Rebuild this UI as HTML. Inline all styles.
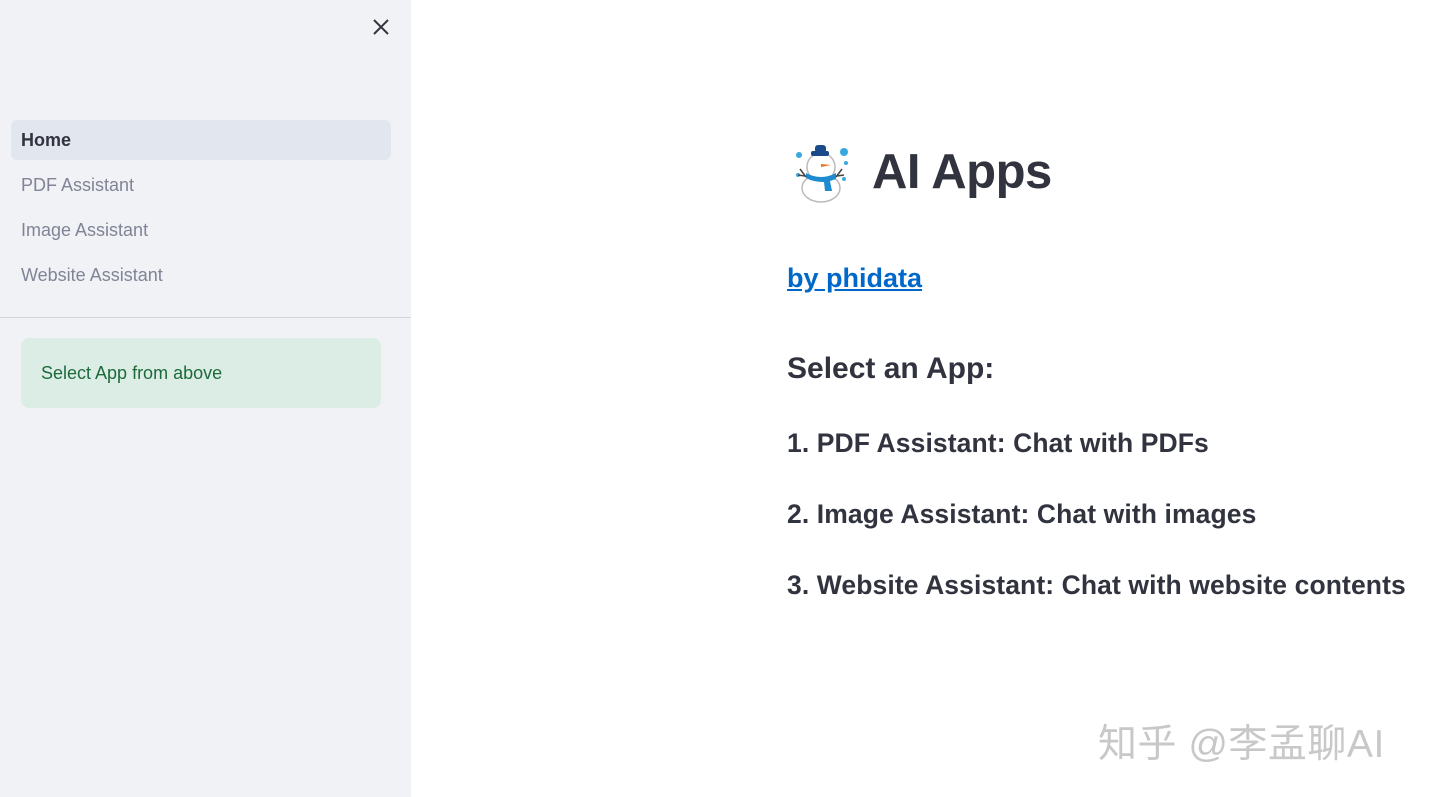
<!DOCTYPE html>
<html><head><meta charset="utf-8"><style>
*{margin:0;padding:0;box-sizing:border-box}
body{width:1440px;height:797px;overflow:hidden;background:#fff;font-family:"Liberation Sans",sans-serif;color:#31333f;position:relative}
.sb{position:absolute;left:0;top:0;width:411px;height:797px;background:#f0f2f6}
.x{position:absolute;left:372px;top:18px;width:18px;height:18px}
.nav{position:absolute;left:11px;width:380px;height:40px;border-radius:6px;padding-left:10px;line-height:41px;font-size:18px;color:#808495}
.nav.on{background:#e2e6ee;color:#31333f;font-weight:bold}
.hr{position:absolute;left:0;top:317px;width:411px;height:1px;background:#d3d5db}
.alert{position:absolute;left:21px;top:338px;width:360px;height:70px;border-radius:8px;background:#dbede5;color:#1d6a3a;font-size:18px;line-height:70px;padding-left:20px}
.main{position:absolute;left:787px}
h1{position:absolute;left:872px;top:144px;font-size:49px;font-weight:bold;color:#31333f;letter-spacing:-0.5px}
.link{top:263px;font-size:27px;color:#0068c9;text-decoration:underline;font-weight:bold}
.h3{top:352px;font-size:30px;font-weight:bold}
.li{font-size:26.5px;font-weight:bold;letter-spacing:0.1px}
.wm{position:absolute;left:1098px;top:713px;font-size:39px;color:#c8c8c8;font-family:"Liberation Sans","Noto Sans CJK SC",sans-serif;letter-spacing:0.5px}
</style></head><body>
<div class="sb">
<svg class="x" viewBox="0 0 18 18"><path d="M2 2L16 16M16 2L2 16" stroke="#31333f" stroke-width="2"/></svg>
<div class="nav on" style="top:120px">Home</div>
<div class="nav" style="top:165px">PDF Assistant</div>
<div class="nav" style="top:210px">Image Assistant</div>
<div class="nav" style="top:255px">Website Assistant</div>
<div class="hr"></div>
<div class="alert">Select App from above</div>
</div>
<svg style="position:absolute;left:794px;top:143px" width="58" height="62" viewBox="0 0 58 62">
<circle cx="5" cy="12" r="3" fill="#38a8e0"/><circle cx="50" cy="9" r="4" fill="#38a8e0"/><circle cx="52" cy="20" r="2" fill="#38a8e0"/><circle cx="4" cy="32" r="2" fill="#38a8e0"/><circle cx="50" cy="36" r="2" fill="#38a8e0"/>
<ellipse cx="27" cy="45" rx="19" ry="14" fill="#fff" stroke="#bbb" stroke-width="1.5"/>
<circle cx="27" cy="24" r="14" fill="#fff" stroke="#bbb" stroke-width="1.5"/>
<rect x="17" y="8" width="18" height="5" rx="2" fill="#1a4a8a"/><rect x="21" y="2" width="11" height="8" rx="3" fill="#1a4a8a"/>
<path d="M27 21L37 22L27 24Z" fill="#f07020"/>
<path d="M12 30Q27 38 42 30L42 36L36 38L38 48L31 48L30 39Q19 39 12 35Z" fill="#1e8ad0"/>
<path d="M6 26L12 34M4 32L11 33M48 26L42 34M50 32L43 33" stroke="#444" stroke-width="1.5"/>
</svg>
<h1>AI Apps</h1>
<div class="main link">by phidata</div>
<div class="main h3">Select an App:</div>
<div class="main li" style="top:428px">1. PDF Assistant: Chat with PDFs</div>
<div class="main li" style="top:499px">2. Image Assistant: Chat with images</div>
<div class="main li" style="top:570px">3. Website Assistant: Chat with website contents</div>
<div class="wm">知乎 @李孟聊AI</div>
</body></html>
